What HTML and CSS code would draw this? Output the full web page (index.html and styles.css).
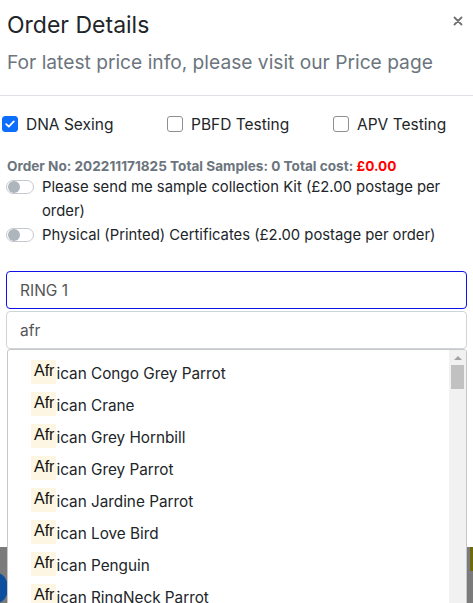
FILE: index.html
```html
<!DOCTYPE html>
<html>
<head>
<meta charset="utf-8">
<link rel="stylesheet" href="styles.css">
</head>
<body>
<div class="backdrop">
  <div class="bg-dot"></div>
  <div class="bg-strip"></div>
</div>
<div class="modal">
  <div class="modal-header">
    <div class="head-text">
      <h1 class="title">Order Details</h1>
      <p class="subtitle">For latest price info, please visit our Price page</p>
    </div>
    <button class="close" aria-label="Close">
      <svg width="10" height="10" viewBox="0 0 10 10"><path d="M1.5 1.5L8.5 8.5M8.5 1.5L1.5 8.5" stroke="#707070" stroke-width="1.8" stroke-linecap="round"/></svg>
    </button>
  </div>
  <div class="modal-body">
    <div class="services">
      <label class="check"><span class="box checked"><svg width="10" height="8" viewBox="0 0 10 8"><path d="M1.2 4.2L3.8 6.6L8.8 1.4" fill="none" stroke="#fff" stroke-width="1.8" stroke-linecap="round" stroke-linejoin="round"/></svg></span>DNA Sexing</label>
      <label class="check"><span class="box"></span>PBFD Testing</label>
      <label class="check"><span class="box"></span>APV Testing</label>
    </div>
    <p class="order-info">Order No: 202211171825 Total Samples: 0 Total cost: <span class="cost">£0.00</span></p>
    <div class="switch-row"><span class="switch"><span class="knob"></span></span><span class="switch-label">Please send me sample collection Kit (£2.00 postage per order)</span></div>
    <div class="switch-row"><span class="switch"><span class="knob"></span></span><span class="switch-label">Physical (Printed) Certificates (£2.00 postage per order)</span></div>
    <div class="sample">
      <div class="input focused">RING 1</div>
      <div class="input">afr</div>
      <div class="dropdown-wrap">
        <ul class="dropdown">
          <li><mark>Afr</mark>ican Congo Grey Parrot</li>
          <li><mark>Afr</mark>ican Crane</li>
          <li><mark>Afr</mark>ican Grey Hornbill</li>
          <li><mark>Afr</mark>ican Grey Parrot</li>
          <li><mark>Afr</mark>ican Jardine Parrot</li>
          <li><mark>Afr</mark>ican Love Bird</li>
          <li><mark>Afr</mark>ican Penguin</li>
          <li><mark>Afr</mark>ican RingNeck Parrot</li>
        </ul>
        <div class="scrollbar">
          <span class="arrow"></span>
          <span class="thumb"></span>
        </div>
      </div>
    </div>
  </div>
</div>
</body>
</html>
```
FILE: styles.css
```css
html, body {
  margin: 0;
  padding: 0;
  height: 603px;
  overflow: hidden;
}
body {
  font-family: "Inter", "Liberation Sans", sans-serif;
  color: #212529;
  background: #fff;
  position: relative;
}
.backdrop {
  position: absolute;
  left: 0;
  right: 0;
  top: 547px;
  bottom: 0;
  background: #7b7b7b;
}
.bg-dot {
  position: absolute;
  left: -14px;
  top: 26px;
  width: 22px;
  height: 30px;
  border-radius: 50%;
  background: #0d4f9e;
}
.bg-strip {
  position: absolute;
  right: 0;
  top: 0;
  width: 3px;
  height: 24px;
  background: #6f6a10;
}
.modal {
  background: #fff;
  height: 547px;
  position: relative;
}
.modal-header {
  display: flex;
  justify-content: space-between;
  align-items: flex-start;
  padding: 9px 8px 0 7px;
  height: 86px;
  border-bottom: 1px solid #dee2e6;
}
.title {
  margin: 0;
  font-size: 23px;
  font-weight: 400;
  line-height: 32px;
  color: #212529;
}
.subtitle {
  margin: 8px 0 0;
  font-size: 19.2px;
  line-height: 26px;
  color: #6c757d;
}
.close {
  border: 0;
  background: none;
  padding: 0;
  margin-top: 7px;
  margin-right: 2px;
  display: flex;
}
.modal-body {
  padding: 0 6px 0 2px;
}
.services {
  display: grid;
  grid-template-columns: 165px 166px 1fr;
  margin-top: 16px;
  height: 24px;
  align-items: center;
}
.check {
  display: flex;
  align-items: center;
  gap: 8px;
  font-size: 15.5px;
  color: #212529;
}
.box {
  width: 14px;
  height: 14px;
  border: 1px solid #8f8f8f;
  border-radius: 3px;
  display: flex;
  align-items: center;
  justify-content: center;
  background: #fff;
}
.box.checked {
  background: #0d6efd;
  border-color: #0d6efd;
}
.order-info {
  margin: 21px 0 0 5px;
  font-size: 13.6px;
  font-weight: 700;
  line-height: 18px;
  color: #6c757d;
}
.cost {
  color: #ff0000;
}
.switch-row {
  display: flex;
  align-items: flex-start;
  gap: 8px;
  padding-left: 4px;
  font-size: 14.8px;
  line-height: 24px;
  color: #212529;
}
.switch {
  flex: none;
  width: 26px;
  height: 12px;
  border: 1px solid #c5c9cd;
  border-radius: 8px;
  margin-top: 5px;
  position: relative;
  background: #fff;
}
.knob {
  position: absolute;
  left: 1px;
  top: 0;
  width: 12px;
  height: 12px;
  border-radius: 50%;
  background: #adb5bd;
}
.sample {
  margin-top: 24px;
  padding-left: 4px;
  position: relative;
}
.input {
  height: 36px;
  border: 1px solid #ced4da;
  border-radius: 4px;
  padding: 0 13px;
  display: flex;
  align-items: center;
  font-size: 15.5px;
  color: #555;
  margin-bottom: 2px;
}
.input.focused {
  border-color: #1010e8;
}
.dropdown-wrap {
  position: absolute;
  left: 5px;
  right: 0;
  top: 78px;
  height: 260px;
  border: 1px solid #c8c8c8;
  border-radius: 3px 3px 0 0;
  background: #fff;
  display: flex;
  overflow: hidden;
}
.dropdown {
  list-style: none;
  margin: 0;
  padding: 7px 0 0 23px;
  flex: 1;
}
.dropdown li {
  height: 32px;
  font-size: 15.3px;
  color: #212529;
  display: flex;
  align-items: center;
}
mark {
  background: #fcf6e2;
  color: #111;
  padding: 3px 2px 5px 3px;
  line-height: 16px;
  font-family: "Liberation Sans", sans-serif;
  font-size: 16px;
  margin-top: -3px;
}
.scrollbar {
  width: 17px;
  background: #f1f1f1;
  display: flex;
  flex-direction: column;
  align-items: center;
}
.arrow {
  margin-top: 6px;
  width: 0;
  height: 0;
  border-left: 4px solid transparent;
  border-right: 4px solid transparent;
  border-bottom: 4px solid #a3a3a3;
}
.thumb {
  margin-top: 5px;
  width: 13px;
  height: 24px;
  background: #c1c1c1;
}
```
